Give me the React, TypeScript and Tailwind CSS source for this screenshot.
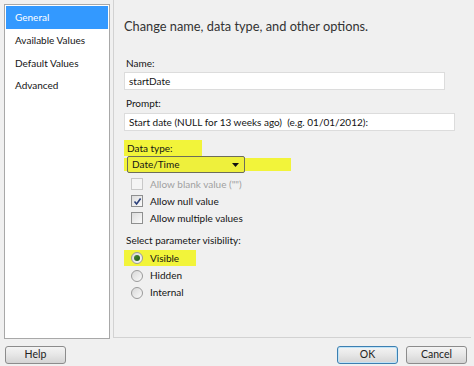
import React from "react";

const font = { fontFamily: 'Lato, "Open Sans", sans-serif' };

function Checkbox({ checked, disabled }: { checked?: boolean; disabled?: boolean }) {
  return (
    <div
      className={`w-[12px] h-[12px] border flex items-center justify-center ${
        disabled ? "border-[#c8c8c8] bg-[#f4f4f4]" : "border-[#8e8f8f] bg-gradient-to-br from-[#dcdcdc] to-[#fbfbfb]"
      }`}
    >
      {checked && (
        <svg width="9" height="9" viewBox="0 0 9 9">
          <path d="M1.5 4.5 L3.6 7 L7.6 1.5" stroke="#2a3f7a" strokeWidth="1.6" fill="none" />
        </svg>
      )}
    </div>
  );
}

function Radio({ checked }: { checked?: boolean }) {
  return (
    <div className="w-[12px] h-[12px] rounded-full border border-[#9a9a9a] bg-gradient-to-br from-[#d8d8d8] to-[#fafafa] flex items-center justify-center">
      {checked && <div className="w-[6px] h-[6px] rounded-full bg-gradient-to-br from-[#4a8a3a] to-[#1f5a16]" />}
    </div>
  );
}

function Button({ label, primary }: { label: string; primary?: boolean }) {
  return (
    <div
      className={`h-[18px] w-[61px] rounded-[3px] border flex items-center justify-center text-[10.5px] text-[#222] bg-gradient-to-b from-[#f4f4f4] via-[#e6e6e6] to-[#d4d4d4] ${
        primary ? "border-[#3c7fb1] shadow-[inset_0_0_0_1px_#bfe3f7]" : "border-[#8c8c8c]"
      }`}
    >
      {label}
    </div>
  );
}

export default function App() {
  return (
    <div className="w-[474px] h-[366px] bg-[#f0f0f0] flex flex-col text-[#141414] overflow-hidden" style={font}>
      <div className="flex pt-[4px] pl-[4px] pr-[3px] h-[339px]">
        <div className="w-[106px] h-[335px] border border-[#a8a8a8] bg-white p-[1px] text-[10px]">
          <div className="h-[23px] bg-[#3399ff] text-white pl-[9px] flex items-center">General</div>
          <div className="h-[23px] pl-[9px] flex items-center">Available Values</div>
          <div className="h-[22px] pl-[9px] flex items-center">Default Values</div>
          <div className="h-[23px] pl-[9px] flex items-center">Advanced</div>
        </div>
        <div className="flex-1 ml-[3px] mt-[-4px] pt-[16px] border-l border-b border-[#d2d2d2] mb-[1px] pl-[10px] text-[10px]">
          <div className="text-[12.8px] text-[#333] leading-[20px]">Change name, data type, and other options.</div>
          <div className="mt-[20px] pl-[2px] leading-[15px]">Name:</div>
          <div className="mt-[1px] w-[321px] h-[18px] bg-white border border-[#dcdcdc] pl-[4px] flex items-center">startDate</div>
          <div className="mt-[6px] pl-[2px] leading-[15px]">Prompt:</div>
          <div className="mt-[2px] w-[331px] h-[18px] bg-white border border-[#dcdcdc] pl-[4px] flex items-center">
            Start date (NULL for 13 weeks ago)&nbsp; (e.g. 01/01/2012):
          </div>
          <div className="mt-[9px] w-[78px] h-[16px] bg-[#f2f43a] pl-[3px] flex items-center">Data type:</div>
          <div className="flex items-center">
            <div className="w-[3px] h-[13px] bg-[#f2f43a]" />
            <div className="w-[118px] h-[17px] border border-[#6d6d5a] rounded-[2px] bg-[#eef03c] pl-[4px] pr-[5px] flex items-center justify-between">
              <span>Date/Time</span>
              <svg width="7" height="4" viewBox="0 0 7 4">
                <path d="M0 0 H7 L3.5 4 Z" fill="#111" />
              </svg>
            </div>
            <div className="w-[46px] h-[13px] bg-[#f2f43a]" />
          </div>
          <div className="mt-[5px] pl-[7px] flex flex-col gap-[5px]">
            <div className="flex items-center gap-[7px] h-[12px] text-[#a0a0a0]">
              <Checkbox disabled />
              <span>Allow blank value ("")</span>
            </div>
            <div className="flex items-center gap-[7px] h-[12px]">
              <Checkbox checked />
              <span>Allow null value</span>
            </div>
            <div className="flex items-center gap-[7px] h-[12px]">
              <Checkbox />
              <span>Allow multiple values</span>
            </div>
          </div>
          <div className="mt-[9px] pl-[2px] leading-[15px]">Select parameter visibility:</div>
          <div className="mt-[2px] flex flex-col gap-[2px]">
            <div className="w-[72px] h-[16px] bg-[#f2f43a] pl-[7px] flex items-center gap-[7px]">
              <Radio checked />
              <span>Visible</span>
            </div>
            <div className="h-[15px] pl-[7px] flex items-center gap-[7px]">
              <Radio />
              <span>Hidden</span>
            </div>
            <div className="h-[15px] pl-[7px] flex items-center gap-[7px]">
              <Radio />
              <span>Internal</span>
            </div>
          </div>
        </div>
      </div>
      <div className="flex items-center pl-[5px] pr-[7px] mt-[7px]">
        <Button label="Help" />
        <div className="flex-1" />
        <Button label="OK" primary />
        <div className="w-[8px]" />
        <Button label="Cancel" />
      </div>
    </div>
  );
}
